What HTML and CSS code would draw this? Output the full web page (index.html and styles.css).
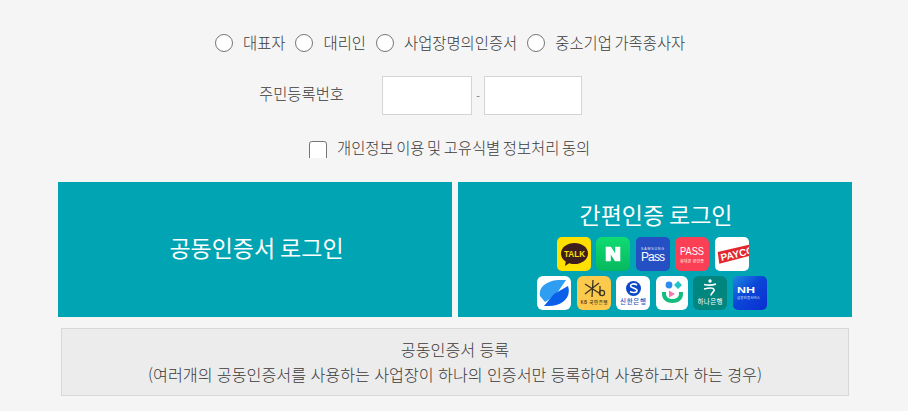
FILE: index.html
```html
<!DOCTYPE html>
<html lang="ko">
<head>
<meta charset="utf-8">
<title>공동인증서 로그인</title>
<link rel="stylesheet" href="styles.css">
</head>
<body>
<main class="page">
  <div class="radios">
    <label class="radio-item"><input type="radio" name="role" class="radio"><span>대표자</span></label>
    <label class="radio-item"><input type="radio" name="role" class="radio"><span>대리인</span></label>
    <label class="radio-item"><input type="radio" name="role" class="radio"><span>사업장명의인증서</span></label>
    <label class="radio-item"><input type="radio" name="role" class="radio"><span>중소기업 가족종사자</span></label>
  </div>
  <div class="id-row">
    <span class="id-label">주민등록번호</span>
    <input type="text" class="field field-a" aria-label="앞자리">
    <span class="dash">-</span>
    <input type="text" class="field field-b" aria-label="뒷자리">
  </div>
  <label class="agree">
    <span class="check-clip"><span class="check"></span></span>
    <span>개인정보 이용 및 고유식별 정보처리 동의</span>
  </label>
  <div class="actions">
    <a class="action action-cert">공동인증서 로그인</a>
    <a class="action action-simple">
      <span class="simple-title">간편인증 로그인</span>
      <span class="badges badges-top">
        <svg class="badge" viewBox="0 0 34 34"><rect width="34" height="34" rx="5" fill="#ffe000"/><ellipse cx="17.500" cy="16.500" rx="13.500" ry="10.500" fill="#3c1e1e"/><path d="M9 23l-1 6 6-4z" fill="#3c1e1e"/><text x="17.500" y="20" class="t t-talk" textLength="21" lengthAdjust="spacingAndGlyphs">TALK</text></svg>
        <svg class="badge" viewBox="0 0 34 34"><defs><linearGradient id="gn" x1="0" y1="0" x2="0" y2="1"><stop offset="0" stop-color="#10dc72"/><stop offset="1" stop-color="#06b85e"/></linearGradient></defs><rect width="34" height="34" rx="6" fill="url(#gn)"/><path d="M9.700 9.700h5.300l4.200 6.800V9.700h5.100v14.500H19l-4.200-6.800v6.800H9.700z" fill="#fff"/></svg>
        <svg class="badge" viewBox="0 0 34 34"><rect width="34" height="34" rx="5" fill="#2450c4"/><text x="5" y="12.500" class="t t-sam" textLength="23">SAMSUNG</text><text x="5" y="24" class="t t-spass" textLength="24">Pass</text></svg>
        <svg class="badge" viewBox="0 0 34 34"><rect width="34" height="34" rx="6" fill="#fb3f55"/><text x="17" y="18" class="t t-pass" textLength="24" lengthAdjust="spacingAndGlyphs">PASS</text><text x="17" y="25.500" class="t t-small" textLength="24">휴대폰 본인증</text></svg>
        <svg class="badge" viewBox="0 0 34 34"><rect width="34" height="34" rx="5" fill="#fff"/><path d="M2.700 15L34 7.700V19L4.300 26.700z" fill="#e2272c"/><text x="6.500" y="24" class="t t-payco" transform="rotate(-13 6.500 24)">PAYCO</text></svg>
      </span>
      <span class="badges">
        <svg class="badge" viewBox="0 0 34 34"><rect width="34" height="34" rx="6" fill="#fff"/><path d="M3 20C1 10 12 4 23 4h6L18 20l-10 6z" fill="#2e9df2"/><path d="M31 10c4 12-7 20-19 20H7l10-12z" fill="#0a60e8"/></svg>
        <svg class="badge" viewBox="0 0 34 34"><rect width="34" height="34" rx="6" fill="#fbc94b"/><path d="M16 4l-1 17M8 8l14 9M22 7L8 18M23 10v9" stroke="#3c3322" stroke-width="1.300" fill="none"/><circle cx="25" cy="17" r="2.600" stroke="#3c3322" stroke-width="1.200" fill="none"/><text x="17" y="27.500" class="t t-kb" textLength="27">KB 국민은행</text></svg>
        <svg class="badge" viewBox="0 0 34 34"><rect width="34" height="34" rx="6" fill="#fff"/><circle cx="17.500" cy="12.500" r="7.500" fill="#0a46c8"/><path d="M21 9c-3-2-6.500-1-6.500 1s6.500 2 6.500 4.500-4.500 2.500-7 1" stroke="#fff" stroke-width="1.600" fill="none"/><text x="17" y="28" class="t t-shin" textLength="26">신한은행</text></svg>
        <svg class="badge badge-narrow" viewBox="0 0 32 34"><rect width="32" height="34" rx="6" fill="#fff"/><circle cx="13" cy="9" r="3.400" fill="#2d8bf0"/><path d="M22 5l4 4-4 4-4-4z" fill="#22c5c5"/><path d="M13 14.500l6 3.500-6 3.500z" fill="#f576b0"/><path d="M6 16v2c0 6 5 9 10.500 9S27 24 27 18v-2h-4v2c0 3-3 5-6.500 5S10 21 10 18v-2z" fill="#13bd7e"/></svg>
        <svg class="badge" viewBox="0 0 34 34"><rect width="34" height="34" rx="6" fill="#00857f"/><path d="M11 8.500c4 1 8 1 12-.5M11 13c4-1 9-2 10 .5s-3 3-3 6" stroke="#fff" stroke-width="1.700" fill="none"/><circle cx="17" cy="5" r="1.700" fill="#fff"/><text x="17" y="28" class="t t-hana" textLength="25">하나은행</text></svg>
        <svg class="badge" viewBox="0 0 34 34"><defs><linearGradient id="gb" x1="0" y1="0" x2="1" y2="1"><stop offset="0" stop-color="#1d8ae0"/><stop offset=".45" stop-color="#0b46d8"/><stop offset="1" stop-color="#0a2fd0"/></linearGradient></defs><rect width="34" height="34" rx="5" fill="url(#gb)"/><text x="4" y="17" class="t t-nh" textLength="18" lengthAdjust="spacingAndGlyphs">NH</text><text x="4" y="22.500" class="t t-nhs" textLength="23">금융인증서비스</text></svg>
      </span>
    </a>
  </div>
  <div class="register">
    <p>공동인증서 등록</p>
    <p>(여러개의 공동인증서를 사용하는 사업장이 하나의 인증서만 등록하여 사용하고자 하는 경우)</p>
  </div>
</main>
</body>
</html>
```

FILE: styles.css
```css
* { box-sizing: border-box; }
html, body { margin: 0; height: 100%; }
body {
  background: #f5f5f5;
  color: #3a3a3a;
  font-family: "Noto Sans CJK KR", "Noto Sans", sans-serif;
  font-weight: 300;
  font-size: 15.4px;
  word-spacing: -1.800px;
  overflow: hidden;
}
.page { width: 908px; height: 411px; padding-top: 31px; }
.radios {
  display: flex;
  padding-left: 215px;
  gap: 10px;
  height: 24px;
  align-items: center;
}
.radio-item { display: flex; align-items: center; gap: 10px; line-height: 24px; }
.radio-item span { position: relative; top: -1px; }
.radio {
  appearance: none;
  margin: 0;
  width: 18px;
  height: 18px;
  border: 1px solid #767676;
  border-radius: 50%;
  background: #fff;
}
.id-row {
  display: flex;
  align-items: center;
  margin-top: 21px;
  height: 39px;
  padding-left: 259px;
}
.id-label { width: 123px; position: relative; top: -3px; }
.field {
  height: 39px;
  border: 1px solid #d4d4d4;
  background: #fff;
  padding: 0;
  margin: 0;
}
.field-a { width: 90px; }
.field-b { width: 98px; }
.dash { width: 12px; text-align: center; font-size: 11px; }
.agree {
  display: flex;
  align-items: flex-start;
  gap: 10px;
  margin-top: 26px;
  padding-left: 309px;
  height: 17px;
  line-height: 13px;
}
.check-clip { display: block; width: 18px; height: 17px; overflow: hidden; }
.check {
  display: block;
  width: 18px;
  height: 22px;
  border: 1px solid #767676;
  border-radius: 3px;
  background: #fff;
}
.actions {
  display: flex;
  gap: 6px;
  margin: 24px 0 0 58px;
  width: 794px;
  height: 135px;
}
.action {
  flex: 0 0 394px;
  background: #00a4b3;
  color: #fff;
  display: flex;
  flex-direction: column;
  align-items: center;
  justify-content: center;
  font-size: 23px;
  font-weight: 400;
  word-spacing: -1.500px;
}
.action-cert { padding: 0 0 5px 3px; }
.action-simple { justify-content: flex-start; padding-top: 16px; }
.simple-title { line-height: 32px; margin-bottom: 7px; padding-left: 2px; }
.badges { display: flex; gap: 5.600px; height: 34px; margin-bottom: 5px; margin-right: 6px; }
.badges-top { margin-right: 5px; gap: 5.500px; }
.badge { width: 34px; height: 34px; display: block; }
.badge-narrow { width: 32px; }
.t { font-family: "Liberation Sans", sans-serif; font-weight: 700; word-spacing: 0; }
.t-talk { font-size: 8.500px; fill: #ffe000; text-anchor: middle; }
.t-sam { font-size: 3.500px; fill: #e6ecff; font-weight: 400; }
.t-spass { font-size: 12px; fill: #fff; font-weight: 400; }
.t-pass { font-size: 11.500px; fill: #fff; text-anchor: middle; font-weight: 400; }
.t-small { font-size: 4px; fill: #ffe; text-anchor: middle; font-family: "Noto Sans CJK KR", sans-serif; font-weight: 400; }
.t-payco { font-size: 10px; fill: #fff; }
.t-kb { font-size: 4.500px; fill: #3c3322; text-anchor: middle; font-family: "Noto Sans CJK KR", sans-serif; font-weight: 500; }
.t-shin { font-size: 6.500px; fill: #1f4fc0; text-anchor: middle; font-family: "Noto Sans CJK KR", sans-serif; font-weight: 500; }
.t-hana { font-size: 6.500px; fill: #fff; text-anchor: middle; font-family: "Noto Sans CJK KR", sans-serif; font-weight: 400; }
.t-nh { font-size: 9px; fill: #fff; }
.t-nhs { font-size: 3.500px; fill: #dfe8ff; font-family: "Noto Sans CJK KR", sans-serif; font-weight: 400; }
.register {
  margin: 11px 0 0 61px;
  width: 788px;
  height: 68px;
  background: #ececec;
  border: 1px solid #d8d8d8;
  text-align: center;
  padding-top: 8px;
  font-size: 16.200px;
  word-spacing: -0.300px;
}
.register p { margin: 0; line-height: 25px; }
```
